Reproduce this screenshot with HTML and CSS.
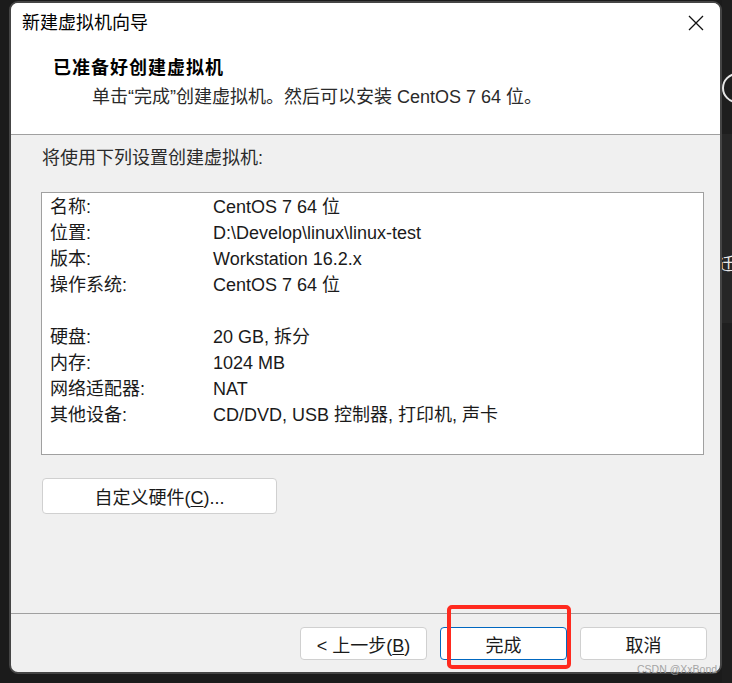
FILE: index.html
```html
<!DOCTYPE html>
<html lang="zh-CN">
<head>
    <meta charset="UTF-8">
    <meta name="viewport" content="width=device-width, initial-scale=1.0">
    <title>新建虚拟机向导</title>
    <link rel="stylesheet" href="styles.css">
</head>
<body>
    <!-- parte da área de trabalho atrás da janela -->
    <div class="desk-strip">
        <div class="desk-band"></div>
        <svg class="desk-ring" width="10" height="32" viewBox="0 0 10 32">
            <circle cx="15" cy="16" r="14" fill="none" stroke="#e6e6e6" stroke-width="2"/>
        </svg>
        <span class="desk-char">迁</span>
    </div>

    <div class="window">
        <div class="titlebar">
            <span class="title">新建虚拟机向导</span>
            <svg class="close" width="16" height="16" viewBox="0 0 16 16">
                <path d="M1 1 L15 15 M15 1 L1 15" stroke="#111" stroke-width="1.3" fill="none"/>
            </svg>
        </div>

        <div class="header">
            <h2>已准备好创建虚拟机</h2>
            <p class="subtitle">单击“完成”创建虚拟机。然后可以安装 CentOS 7 64 位。</p>
        </div>

        <div class="content">
            <p class="intro">将使用下列设置创建虚拟机:</p>
            <div class="summary">
                <span>名称:</span><span>CentOS 7 64 位</span>
                <span>位置:</span><span>D:\Develop\linux\linux-test</span>
                <span>版本:</span><span>Workstation 16.2.x</span>
                <span>操作系统:</span><span>CentOS 7 64 位</span>
                <span class="blank"></span><span class="blank"></span>
                <span>硬盘:</span><span>20 GB, 拆分</span>
                <span>内存:</span><span>1024 MB</span>
                <span>网络适配器:</span><span>NAT</span>
                <span>其他设备:</span><span>CD/DVD, USB 控制器, 打印机, 声卡</span>
            </div>
            <button class="btn custom">自定义硬件(<u>C</u>)...</button>
        </div>

        <div class="footer">
            <button class="btn">&lt; 上一步(<u>B</u>)</button>
            <button class="btn default">完成</button>
            <button class="btn">取消</button>
        </div>
    </div>

    <div class="mark"></div>
    <div class="watermark">CSDN @XxBond</div>
</body>
</html>
```

FILE: styles.css
```css
body {
    font-family: "Liberation Sans", "Noto Sans CJK SC", sans-serif;
    background-color: #1b1b1b;
    color: #1a1a1a;
    margin: 0;
    width: 732px;
    height: 683px;
    position: relative;
    overflow: hidden;
}
.desk-strip {
    position: absolute;
    left: 722px;
    top: 0;
    width: 10px;
    height: 683px;
    background-color: #1e1e1e;
    overflow: hidden;
}
.desk-band {
    margin-top: 134px;
    height: 189px;
    background-color: #262626;
}
.desk-ring {
    position: absolute;
    left: 0;
    top: 72px;
}
.desk-char {
    position: absolute;
    left: -4px;
    top: 255px;
    font-size: 17px;
    line-height: 20px;
    color: #e8e8e8;
}
.window {
    box-sizing: border-box;
    margin: 1px 0 0 9px;
    width: 713px;
    height: 673px;
    border: 2px solid #454545;
    border-radius: 9px;
    background-color: #f0f0f0;
    display: flex;
    flex-direction: column;
    overflow: hidden;
}
.titlebar {
    height: 40px;
    flex-shrink: 0;
    background-color: #fff;
    display: flex;
    align-items: center;
    justify-content: space-between;
    padding: 0 16px 0 11px;
}
.title {
    font-size: 18px;
    line-height: 40px;
    color: #000;
}
.header {
    height: 79px;
    flex-shrink: 0;
    background-color: #fff;
    border-bottom: 1px solid #a0a0a0;
    padding: 12px 0 0 42px;
}
h2 {
    margin: 0;
    font-size: 18px;
    line-height: 26px;
    font-weight: bold;
    letter-spacing: 1px;
    color: #000;
}
.subtitle {
    margin: 3px 0 0 39px;
    font-size: 18px;
    line-height: 26px;
    color: #2a2a2a;
}
.content {
    flex: 1;
    padding: 10px 16px 0 30px;
}
.intro {
    margin: 0 0 0 1px;
    font-size: 18px;
    line-height: 26px;
    color: #2a2a2a;
}
.summary {
    box-sizing: border-box;
    margin-top: 21px;
    height: 263px;
    border: 1px solid #a0a0a0;
    background-color: #fff;
    padding: 1px 0 0 8px;
    display: grid;
    grid-template-columns: 163px 1fr;
    grid-auto-rows: 26px;
    align-content: start;
    font-size: 18px;
    line-height: 26px;
}
.btn {
    font-family: "Liberation Sans", "Noto Sans CJK SC", sans-serif;
    font-size: 18px;
    color: #1a1a1a;
    background-color: #fff;
    border: 1px solid #d0d0d0;
    border-radius: 4px;
    padding: 0;
    box-sizing: border-box;
}
.btn u {
    text-underline-offset: 2px;
}
.custom {
    display: block;
    margin: 23px 0 0 1px;
    width: 235px;
    height: 36px;
}
.footer {
    height: 45px;
    flex-shrink: 0;
    border-top: 1px solid #a0a0a0;
    display: flex;
    justify-content: flex-end;
    align-items: flex-start;
    gap: 13px;
    padding: 13px 13px 0 0;
}
.footer .btn {
    width: 127px;
    height: 33px;
}
.footer .btn.default {
    border-color: #0067c0;
}
.mark {
    position: absolute;
    left: 447px;
    top: 605px;
    width: 124px;
    height: 64px;
    box-sizing: border-box;
    border: 4px solid #ff2a1f;
    border-radius: 5px;
}
.watermark {
    position: absolute;
    left: 637px;
    top: 662px;
    font-size: 10.5px;
    line-height: 14px;
    color: #a4a4a4;
}
```
